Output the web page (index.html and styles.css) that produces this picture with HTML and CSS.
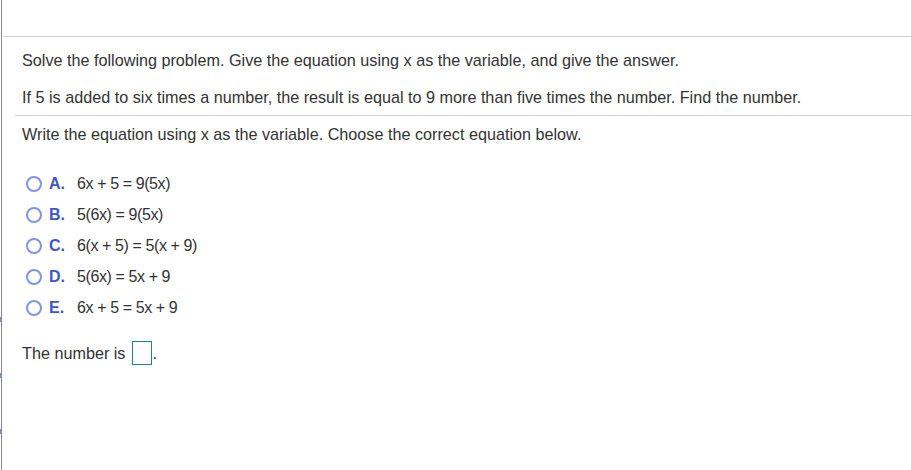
FILE: index.html
```html
<!DOCTYPE html>
<html>
<head>
<meta charset="utf-8">
<link rel="stylesheet" href="styles.css">
</head>
<body>
<div class="page">
  <div class="edge">
    <span class="mark m1"></span>
    <span class="mark m2"></span>
    <span class="mark m3"></span>
  </div>
  <div class="main">
    <div class="top"></div>
    <div class="intro">
      <p class="line l1">Solve the following problem. Give the equation using x as the variable, and give the answer.</p>
      <p class="line l2">If 5 is added to six times a number, the result is equal to 9 more than five times the number. Find the number.</p>
    </div>
    <div class="question">
      <p class="line l3">Write the equation using x as the variable. Choose the correct equation below.</p>
      <ul class="options">
        <li class="opt"><span class="radio"></span><span class="letter">A.</span><span class="expr">6x + 5 = 9(5x)</span></li>
        <li class="opt"><span class="radio"></span><span class="letter">B.</span><span class="expr">5(6x) = 9(5x)</span></li>
        <li class="opt"><span class="radio"></span><span class="letter">C.</span><span class="expr">6(x + 5) = 5(x + 9)</span></li>
        <li class="opt"><span class="radio"></span><span class="letter">D.</span><span class="expr">5(6x) = 5x + 9</span></li>
        <li class="opt"><span class="radio"></span><span class="letter">E.</span><span class="expr">6x + 5 = 5x + 9</span></li>
      </ul>
      <p class="answer">The number is <span class="box"></span>.</p>
    </div>
  </div>
</div>
</body>
</html>
```

FILE: styles.css
```css
html, body {
  margin: 0;
  padding: 0;
  background: #fff;
}
body {
  font-family: "Liberation Sans", Arial, sans-serif;
  color: #333;
  font-size: 16.2px;
  width: 911px;
  height: 470px;
  overflow: hidden;
}
.page {
  display: flex;
  height: 470px;
}
.edge {
  width: 1px;
  margin-left: 1px;
  background: #8a8a8a;
  position: relative;
  flex: none;
}
.mark {
  position: absolute;
  left: -1px;
  width: 2px;
  height: 5px;
  background: #7d8bb0;
}
.m1 { top: 317px; }
.m2 { top: 373px; }
.m3 { top: 429px; }
.main {
  flex: 1;
  padding-top: 36px;
}
.top {
  height: 1px;
  background: #cfd2da;
  margin-left: 1px;
}
.intro {
  padding-left: 20px;
  padding-top: 13px;
}
.line {
  margin: 0;
  line-height: 20px;
}
.l2 {
  margin-top: 17px;
  padding-bottom: 8px;
}
.question {
  margin-left: 13px;
  border-top: 1px solid #cfd2da;
  padding-left: 7px;
  padding-top: 8px;
}
.options {
  list-style: none;
  margin: 24px 0 0 0;
  padding: 0;
  font-size: 16px;
}
.opt {
  display: flex;
  align-items: center;
  height: 31px;
  margin-left: 4px;
}
.radio {
  width: 12px;
  height: 12px;
  border: 2px solid #7f95e3;
  border-radius: 50%;
  flex: none;
  margin-right: 7px;
}
.letter {
  color: #3c57c4;
  font-weight: bold;
  width: 28px;
}
.expr {
  color: #333;
  letter-spacing: -0.4px;
}
.answer {
  margin: 18px 0 0 0;
  line-height: 24px;
  display: flex;
  align-items: center;
}
.box {
  display: inline-block;
  width: 18px;
  height: 22px;
  border: 1px solid #1a7f9c;
  margin-left: 7px;
}
```
